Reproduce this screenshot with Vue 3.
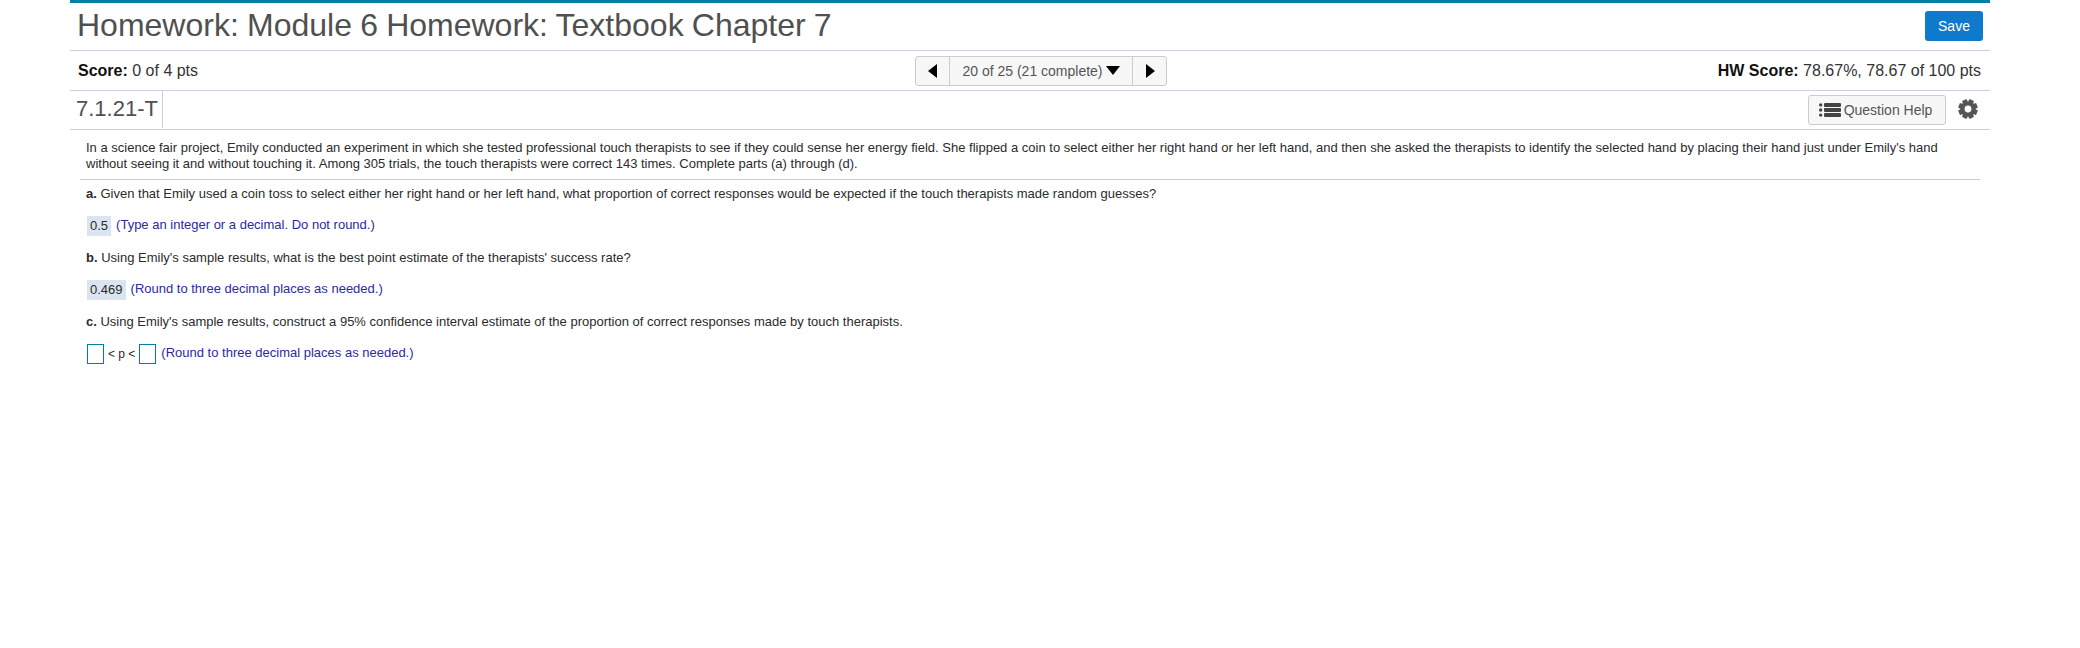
<script setup>
const pts = '78.67%, 78.67 of 100 pts';

// 8 tooth cog, outline worked out from the angle of each tooth
const gearPath = () => {
  const c = 10;
  const at = (r, a) => `${(c + r * Math.cos(a)).toFixed(2)} ${(c + r * Math.sin(a)).toFixed(2)}`;
  let d = '';
  for (let i = 0; i < 8; i++) {
    const a = (i * Math.PI) / 4 + Math.PI / 8;
    const tooth = [at(7.6, a - 0.36), at(10, a - 0.24), at(10, a + 0.24), at(7.6, a + 0.36)];
    d += (i === 0 ? 'M' : 'L') + tooth.join('L');
  }
  return d + 'Z M10 6.6a3.4 3.4 0 1 0 0 6.8a3.4 3.4 0 1 0 0-6.8Z';
};
</script>

<template>
  <div class="page">
    <header class="title-row">
      <h1>Homework: Module 6 Homework: Textbook Chapter 7</h1>
      <button class="save-btn">Save</button>
    </header>

    <div class="score-row">
      <div class="score-left"><b>Score:</b> 0 of 4 pts</div>
      <div class="pager">
        <button class="pager-arrow">
          <svg width="10" height="14" viewBox="0 0 10 14"><path d="M9 0V14L0 7Z" fill="#000" /></svg>
        </button>
        <button class="pager-mid">
          20 of 25 (21 complete)
          <svg width="14" height="9" viewBox="0 0 14 9"><path d="M0 0H14L7 9Z" fill="#000" /></svg>
        </button>
        <button class="pager-arrow">
          <svg width="10" height="14" viewBox="0 0 10 14"><path d="M1 0V14L10 7Z" fill="#000" /></svg>
        </button>
      </div>
      <div class="score-right"><b>HW Score:</b> {{ pts }}</div>
    </div>

    <div class="question-row">
      <div class="question-id">7.1.21-T</div>
      <div class="question-tools">
        <button class="help-btn">
          <svg width="22" height="14" viewBox="0 0 22 14">
            <g fill="#444">
              <circle cx="1.7" cy="1.9" r="1.7" />
              <circle cx="1.7" cy="7" r="1.7" />
              <circle cx="1.7" cy="12.1" r="1.7" />
              <rect x="5" y="0" width="17" height="4" rx="1" />
              <rect x="5" y="5" width="17" height="4" rx="1" />
              <rect x="5" y="10" width="17" height="4" rx="1" />
            </g>
          </svg>
          Question Help
        </button>
        <svg class="gear" width="20" height="20" viewBox="0 0 20 20">
          <path fill="#555" fill-rule="evenodd" :d="gearPath()" />
        </svg>
      </div>
    </div>

    <main class="content">
      <p class="intro">In a science fair project, Emily conducted an experiment in which she tested professional touch therapists to see if they could sense her energy field. She flipped a coin to select either her right hand or her left hand, and then she asked the therapists to identify the selected hand by placing their hand just under Emily's hand without seeing it and without touching it. Among 305 trials, the touch therapists were correct 143 times. Complete parts (a) through (d).</p>

      <p class="part first"><b>a.</b> Given that Emily used a coin toss to select either her right hand or her left hand, what proportion of correct responses would be expected if the touch therapists made random guesses?</p>
      <div class="answer"><span class="filled">0.5</span><span class="hint">(Type an integer or a decimal. Do not round.)</span></div>

      <p class="part"><b>b.</b> Using Emily's sample results, what is the best point estimate of the therapists' success rate?</p>
      <div class="answer"><span class="filled">0.469</span><span class="hint">(Round to three decimal places as needed.)</span></div>

      <p class="part"><b>c.</b> Using Emily's sample results, construct a 95% confidence interval estimate of the proportion of correct responses made by touch therapists.</p>
      <div class="answer">
        <span class="blank"></span><span class="ineq">&lt; p &lt;</span><span class="blank second"></span><span class="hint">(Round to three decimal places as needed.)</span>
      </div>
    </main>
  </div>
</template>

<style>
html, body { background: #fff; }
</style>

<style scoped>
.page {
  width: 1920px;
  margin-left: 70px;
  height: 648px;
  font-family: "Liberation Sans", Arial, sans-serif;
  color: #2b2b2b;
  border-top: 3px solid #007fa3;
  box-sizing: border-box;
}
.title-row {
  height: 48px;
  border-bottom: 1px solid #d0cfe0;
  display: flex;
  align-items: flex-start;
  justify-content: space-between;
  padding: 8px 7px 0 7px;
  box-sizing: border-box;
}
h1 {
  margin: -4px 0 0;
  font-size: 32px;
  line-height: 36px;
  font-weight: 400;
  color: #505050;
  word-spacing: -0.7px;
}
.save-btn {
  width: 58px;
  height: 30px;
  background: #0f7acb;
  color: #fff;
  border: none;
  border-radius: 3px;
  font: 14px "Liberation Sans", Arial, sans-serif;
  padding: 0;
}
.score-row {
  height: 40px;
  border-bottom: 1px solid #d0cfe0;
  display: grid;
  grid-template-columns: 837px auto 1fr;
  align-items: center;
  padding: 0 9px 0 8px;
  box-sizing: border-box;
  font-size: 16px;
  color: #333;
}
.score-left b, .score-right b { color: #111; }
.score-right { text-align: right; }
.pager {
  display: flex;
  height: 30px;
  border: 1px solid #ccc;
  border-radius: 3px;
  background: #f7f7f7;
  box-sizing: border-box;
}
.pager button {
  background: none;
  border: none;
  padding: 0;
  font: 14px "Liberation Sans", Arial, sans-serif;
  color: #555;
  display: flex;
  align-items: center;
  justify-content: center;
}
.pager-arrow { width: 33px; }
.pager-mid {
  width: 184px;
  gap: 3px;
  border-left: 1px solid #ccc !important;
  border-right: 1px solid #ccc !important;
}
.question-row {
  height: 39px;
  border-bottom: 1px solid #d0cfe0;
  display: flex;
  justify-content: space-between;
  box-sizing: border-box;
}
.question-id {
  font-size: 22px;
  color: #505050;
  width: 93px;
  height: 37px;
  line-height: 36px;
  padding-left: 6px;
  white-space: nowrap;
  border-right: 1px solid #d0cfe0;
  box-sizing: border-box;
}
.question-tools {
  display: flex;
  align-items: center;
  padding-right: 12px;
  gap: 12px;
}
.gear { margin-bottom: 2px; }
.help-btn {
  height: 30px;
  width: 138px;
  border: 1px solid #ccc;
  border-radius: 3px;
  background: #f7f7f7;
  font: 14px "Liberation Sans", Arial, sans-serif;
  color: #555;
  display: flex;
  align-items: center;
  justify-content: center;
  gap: 3px;
  padding: 0 3px 0 0;
}
.content {
  padding: 10px 10px 0 16px;
  font-size: 13px;
  line-height: 15px;
}
p { margin: 0; }
.intro {
  line-height: 16px;
  padding-bottom: 7px;
}
.part { margin-top: 14px; }
.part.first {
  border-top: 1px solid #ccc;
  margin-left: -6px;
  padding: 6px 0 0 6px;
  margin-top: 0;
}
.answer {
  display: flex;
  align-items: center;
  height: 20px;
  margin-top: 15px;
  padding-left: 1px;
}
.filled {
  background: #dbe5f1;
  height: 20px;
  line-height: 19px;
  padding: 0 3px;
}
.hint { color: #2b2b9e; margin-left: 5px; line-height: 18px; padding-bottom: 2px; }
.blank {
  width: 17px;
  height: 20px;
  border: 1px solid #007fa3;
  box-sizing: border-box;
}
.ineq { margin: 0 4px; font-size: 12px; }
</style>
